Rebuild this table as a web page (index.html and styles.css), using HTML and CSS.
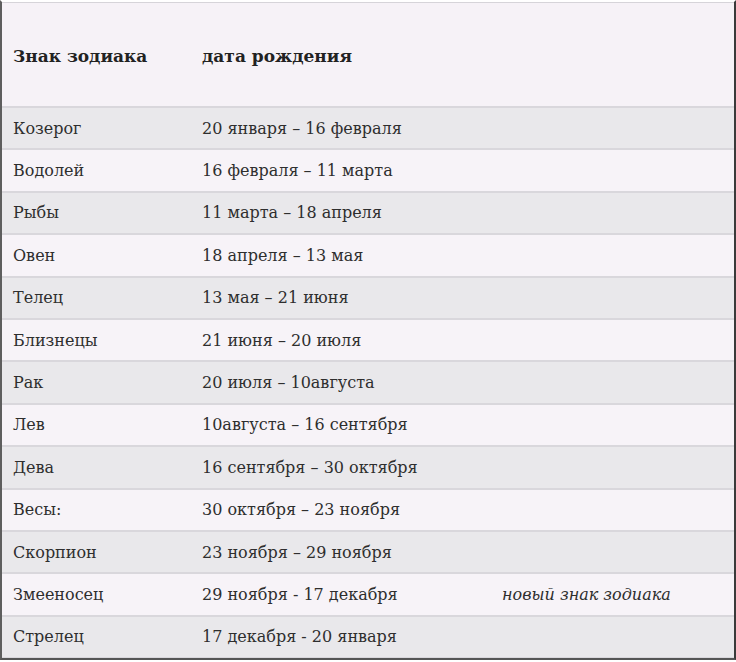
FILE: index.html
```html
<!DOCTYPE html>
<html lang="ru">
<head>
<meta charset="utf-8">
<link rel="stylesheet" href="styles.css">
</head>
<body>
<table class="zodiac">
  <thead>
    <tr class="head">
      <th class="c1 sign">Знак зодиака</th>
      <th class="c2">дата рождения</th>
      <th class="c3"></th>
    </tr>
  </thead>
  <tbody>
    <tr class="odd"><td class="c1">Козерог</td><td class="c2">20 января – 16 февраля</td><td class="c3"></td></tr>
    <tr class="even"><td class="c1">Водолей</td><td class="c2">16 февраля – 11 марта</td><td class="c3"></td></tr>
    <tr class="odd"><td class="c1">Рыбы</td><td class="c2">11 марта – 18 апреля</td><td class="c3"></td></tr>
    <tr class="even"><td class="c1">Овен</td><td class="c2">18 апреля – 13 мая</td><td class="c3"></td></tr>
    <tr class="odd"><td class="c1">Телец</td><td class="c2">13 мая – 21 июня</td><td class="c3"></td></tr>
    <tr class="even"><td class="c1">Близнецы</td><td class="c2">21 июня – 20 июля</td><td class="c3"></td></tr>
    <tr class="odd"><td class="c1">Рак</td><td class="c2">20 июля – 10августа</td><td class="c3"></td></tr>
    <tr class="even"><td class="c1">Лев</td><td class="c2">10августа – 16 сентября</td><td class="c3"></td></tr>
    <tr class="odd"><td class="c1">Дева</td><td class="c2">16 сентября – 30 октября</td><td class="c3"></td></tr>
    <tr class="even"><td class="c1">Весы:</td><td class="c2">30 октября – 23 ноября</td><td class="c3"></td></tr>
    <tr class="odd"><td class="c1">Скорпион</td><td class="c2">23 ноября – 29 ноября</td><td class="c3"></td></tr>
    <tr class="even"><td class="c1">Змееносец</td><td class="c2">29 ноября - 17 декабря</td><td class="c3 note">новый знак зодиака</td></tr>
    <tr class="odd"><td class="c1">Стрелец</td><td class="c2">17 декабря - 20 января</td><td class="c3"></td></tr>
  </tbody>
</table>
</body>
</html>
```
FILE: styles.css
```css
html, body {
  margin: 0;
  padding: 0;
  background: #ffffff;
}
.zodiac {
  width: 736px;
  border-collapse: separate;
  border-spacing: 0;
  box-sizing: border-box;
  border-left: 2px solid #5e5e5e;
  border-right: 2px solid #3a3a3a;
  border-bottom: 2px solid #555555;
  border-top: 2px solid #ffffff;
  font-family: "DejaVu Serif", "Liberation Serif", serif;
  font-size: 16px;
  color: #2e2e2e;
}
.zodiac th,
.zodiac td {
  padding: 0 0 0 11px;
  text-align: left;
  vertical-align: middle;
  border-top: 1px solid #d9d7dc;
  border-bottom: 1px solid #d9d7dc;
}
.zodiac th {
  font-weight: bold;
  font-size: 17px;
  color: #222222;
}
.head {
  height: 105px;
  background: #f6f2f7;
}
.head th {
  border-top: 1px solid #d6d4d9;
  padding-top: 3px;
}
.zodiac tbody tr {
  height: 42.4px;
}
.odd {
  background: #e9e8eb;
}
.even {
  background: #f7f3f8;
}
.c1 {
  width: 178px;
}
.c2 {
  width: 289px;
}
.sign {
  color: #55298c;
}
.note {
  font-style: italic;
}
```
